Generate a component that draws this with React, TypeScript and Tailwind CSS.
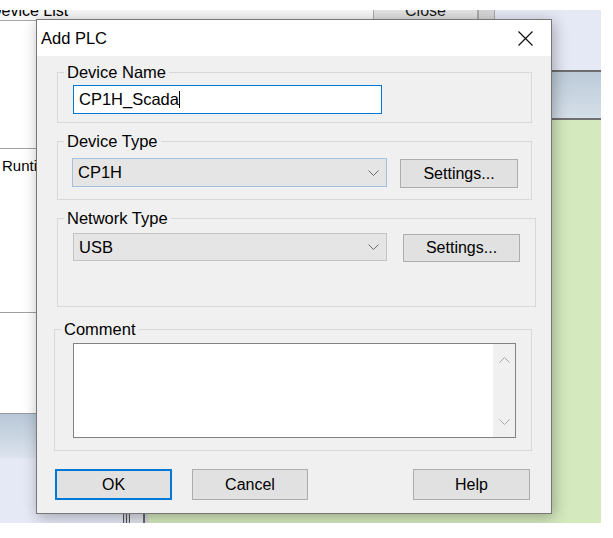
import React from 'react';

const Chevron = ({ up = false, className = '' }: { up?: boolean; className?: string }) => (
  <svg width="11" height="6" viewBox="0 0 11 6" className={className}>
    <path
      d={up ? 'M0.5 5.5L5.5 0.5L10.5 5.5' : 'M0.5 0.5L5.5 5.5L10.5 0.5'}
      fill="none"
      stroke="currentColor"
      strokeWidth="1"
    />
  </svg>
);

type GroupProps = {
  label: string;
  className: string;
  children?: React.ReactNode;
};

const GroupBox = ({ label, className, children }: GroupProps) => (
  <div className={`relative shrink-0 border border-[#d8d8d8] ${className}`}>
    <span className="absolute -top-[11px] left-[6px] px-[3px] bg-[#f0f0f0] leading-[20px] text-[16.5px] text-black whitespace-nowrap">
      {label}
    </span>
    {children}
  </div>
);

const Combo = ({ value, className }: { value: string; className: string }) => (
  <div className={`flex items-center justify-between bg-[#e5e5e5] border pl-[5px] pr-[7px] text-[16.5px] text-black ${className}`}>
    <span>{value}</span>
    <Chevron className="text-[#6a6a6a]" />
  </div>
);

const WinButton = ({ label, className }: { label: string; className: string }) => (
  <button className={`flex items-center justify-center bg-[#e1e1e1] text-[16px] text-black ${className}`}>
    {label}
  </button>
);

export default function App() {
  return (
    <div className="relative w-[613px] h-[538px] bg-white overflow-hidden font-['Liberation_Sans',Arial,sans-serif]">
      {/* screenshot area behind the dialog */}
      <div className="absolute left-0 top-[10px] w-[601px] h-[513px] overflow-hidden bg-[#e5e8f5]">
        {/* green work area */}
        <div className="absolute left-[148px] top-[108px] right-0 bottom-0 border-t-2 border-[#707070] bg-[#d5e9be]" />
        {/* right blue band */}
        <div className="absolute left-[300px] top-[60px] right-0 h-[48px] border-t-2 border-[#6e6e6e] bg-gradient-to-b from-[#bccbd9] to-[#d5dfe9]" />

        {/* device list window */}
        <div className="absolute left-0 top-0 w-[495px] h-[404px] bg-white border-b border-[#9a9a9a] flex flex-col">
          <div className="relative h-[11px] shrink-0 border-b border-[#a8a8a8] overflow-hidden bg-[#f7f7f7]">
            <span className="absolute -left-[10px] -top-[9px] text-[16px] leading-[20px] text-black">Device List</span>
            <div className="absolute left-[373px] -top-[12px] w-[105px] h-[22px] border border-[#acacac] bg-gradient-to-b from-[#efefef] to-[#dcdcdc] flex items-end justify-center">
              <span className="text-[16px] leading-[16px] text-[#1a1a1a]">Close</span>
            </div>
            <div className="absolute left-[478px] top-0 w-[17px] h-[10px] bg-[#d6d6d6] border-x border-[#a8a8a8]" />
          </div>
          <div className="mt-[127px] h-[164px] border-t border-[#a0a0a0] pl-[2px] pt-[6px] text-[15px] text-black">
            Runtime
          </div>
          <div className="border-t border-[#a0a0a0]" />
        </div>

        {/* left blue band */}
        <div className="absolute left-0 top-[404px] w-[150px] h-[44px] bg-gradient-to-b from-[#b8c7d7] to-[#dce3ee]" />

        {/* scrollbar bits under the dialog */}
        <div className="absolute left-[123px] top-[490px] w-[25px] h-[23px] bg-[#d2d6e0] flex">
          <div className="w-[1px] bg-[#555]" />
          <div className="w-[2px]" />
          <div className="w-[1px] bg-[#555]" />
          <div className="w-[2px]" />
          <div className="w-[1px] bg-[#555]" />
          <div className="w-[13px] bg-[#e2e5ef]" />
          <div className="w-[2px] bg-[#666]" />
        </div>

        {/* Add PLC dialog */}
        <div className="absolute left-[36px] top-[9px] w-[516px] h-[495px] border border-[#777] bg-[#f0f0f0] shadow-[2px_3px_14px_rgba(0,0,0,0.3)] flex flex-col">
          <div className="h-[36px] shrink-0 bg-white flex items-center justify-between pl-[4px] pr-[18px]">
            <span className="text-[16.5px] text-black">Add PLC</span>
            <svg width="15" height="15" viewBox="0 0 15 15">
              <path d="M0.5 0.5L14.5 14.5M14.5 0.5L0.5 14.5" stroke="#111" strokeWidth="1.2" fill="none" />
            </svg>
          </div>

          <div className="flex flex-col items-start">
            <GroupBox label="Device Name" className="ml-[20px] mt-[16px] w-[475px] h-[51px]">
              <div className="ml-[15px] mt-[12px] w-[309px] h-[29px] border border-[#0078d7] bg-white flex items-center pl-[5px] text-[16.5px] text-black">
                <span>CP1H_Scada</span>
                <span className="inline-block w-[1px] h-[17px] bg-black" />
              </div>
            </GroupBox>

            <GroupBox label="Device Type" className="ml-[20px] mt-[18px] w-[475px] h-[59px]">
              <div className="flex items-start ml-[14px] mt-[16px]">
                <Combo value="CP1H" className="w-[315px] h-[29px] border-[#a3c2df]" />
                <WinButton label="Settings..." className="ml-[13px] mt-[1px] w-[118px] h-[29px] border border-[#adadad]" />
              </div>
            </GroupBox>

            <GroupBox label="Network Type" className="ml-[20px] mt-[18px] w-[479px] h-[89px]">
              <div className="flex items-start ml-[15px] mt-[14px]">
                <Combo value="USB" className="w-[314px] h-[28px] border-[#c4c4c4]" />
                <WinButton label="Settings..." className="ml-[16px] mt-[1px] w-[117px] h-[28px] border border-[#adadad]" />
              </div>
            </GroupBox>

            <GroupBox label="Comment" className="ml-[17px] mt-[22px] w-[478px] h-[122px]">
              <div className="ml-[18px] mt-[13px] w-[443px] h-[95px] border border-[#828282] bg-white flex justify-end">
                <div className="w-[22px] h-full bg-[#f0f0f0] flex flex-col items-center justify-between pt-[13px] pb-[12px] text-[#a6a6a6]">
                  <Chevron up />
                  <Chevron />
                </div>
              </div>
            </GroupBox>

            <div className="flex mt-[18px]">
              <WinButton label="OK" className="ml-[18px] w-[117px] h-[31px] border-2 border-[#0078d7]" />
              <WinButton label="Cancel" className="ml-[20px] w-[116px] h-[31px] border border-[#adadad]" />
              <WinButton label="Help" className="ml-[105px] w-[117px] h-[31px] border border-[#adadad]" />
            </div>
          </div>
        </div>
      </div>
    </div>
  );
}
